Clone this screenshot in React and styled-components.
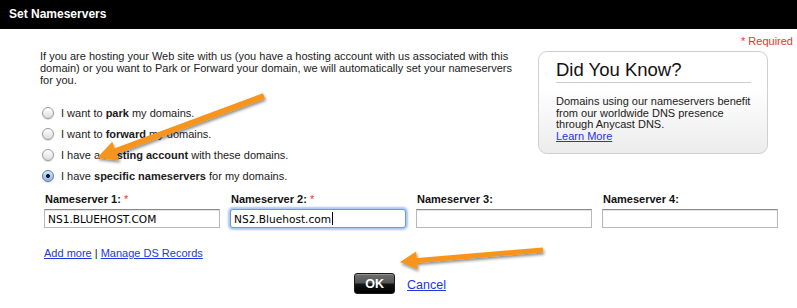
import styled, { createGlobalStyle } from "styled-components";

const GlobalStyle = createGlobalStyle`
  body {
    margin: 0;
    background: #fff;
    font-family: "Liberation Sans", Arial, sans-serif;
    color: #1a1a1a;
  }
`;

const options = [
  { before: "I want to ", bold: "park", after: " my domains." },
  { before: "I want to ", bold: "forward", after: " my domains." },
  { before: "I have a ", bold: "hosting account", after: " with these domains." },
  { before: "I have ", bold: "specific nameservers", after: " for my domains.", checked: true },
];

const servers = [
  { label: "Nameserver 1:", required: true, value: "NS1.BLUEHOST.COM" },
  { label: "Nameserver 2:", required: true, value: "NS2.Bluehost.com", focused: true },
  { label: "Nameserver 3:", value: "" },
  { label: "Nameserver 4:", value: "" },
];

const Arrow = ({ x1, y1, tipX, tipY, len, half, width }) => {
  const dx = tipX - x1;
  const dy = tipY - y1;
  const d = Math.hypot(dx, dy);
  const ux = dx / d;
  const uy = dy / d;
  const bx = tipX - ux * len;
  const by = tipY - uy * len;
  const nx = -uy;
  const ny = ux;
  const head = `${tipX},${tipY} ${bx + nx * half},${by + ny * half} ${bx - nx * half},${by - ny * half}`;
  return (
    <g filter="url(#arrowShadow)">
      <line x1={x1} y1={y1} x2={bx + ux * 2} y2={by + uy * 2} stroke="#f7941d" strokeWidth={width} />
      <polygon points={head} fill="#f7941d" />
    </g>
  );
};

export default function App() {
  return (
    <>
      <GlobalStyle />
      <Page>
        <Header>Set Nameservers</Header>
        <TopRow>
          <Main>
            <Intro>
              If you are hosting your Web site with us (you have a hosting account with us associated with this
              <br />
              domain) or you want to Park or Forward your domain, we will automatically set your nameservers
              <br />
              for you.
            </Intro>
            <Options>
              {options.map((o) => (
                <Option key={o.bold}>
                  <Radio $checked={o.checked} />
                  <span>
                    {o.before}
                    <b>{o.bold}</b>
                    {o.after}
                  </span>
                </Option>
              ))}
            </Options>
          </Main>
          <Side>
            <Required>* Required</Required>
            <InfoBox>
              <InfoTitle>Did You Know?</InfoTitle>
              <InfoText>
                Domains using our nameservers benefit
                <br />
                from our worldwide DNS presence
                <br />
                through Anycast DNS.
                <BlockLink href="#">Learn More</BlockLink>
              </InfoText>
            </InfoBox>
          </Side>
        </TopRow>

        <ServerGrid>
          {servers.map((s) => (
            <Field key={s.label}>
              <FieldLabel>
                {s.label}
                {s.required && <Star> *</Star>}
              </FieldLabel>
              <Input $focused={s.focused}>
                {s.value}
                {s.focused && <Caret />}
              </Input>
            </Field>
          ))}
        </ServerGrid>

        <Links>
          <Link href="#">Add more</Link> | <Link href="#">Manage DS Records</Link>
        </Links>

        <Actions>
          <OkButton>OK</OkButton>
          <CancelLink href="#">Cancel</CancelLink>
        </Actions>

        <Overlay viewBox="0 0 797 308">
          <defs>
            <filter id="arrowShadow" x="-20%" y="-50%" width="140%" height="200%">
              <feDropShadow dx="1" dy="2" stdDeviation="1.6" floodColor="#000" floodOpacity="0.45" />
            </filter>
          </defs>
          <Arrow x1={264} y1={96} tipX={97} tipY={158} len={20} half={10} width={6} />
          <Arrow x1={543} y1={250} tipX={400} tipY={262} len={17} half={9} width={5} />
        </Overlay>
      </Page>
    </>
  );
}

const Page = styled.div`
  position: relative;
  width: 797px;
  height: 308px;
  overflow: hidden;
  font-size: 11px;
`;

const Header = styled.div`
  height: 29px;
  line-height: 29px;
  background: #000;
  color: #fff;
  font-weight: bold;
  font-size: 12px;
  padding-left: 9px;
`;

const TopRow = styled.div`
  display: flex;
  align-items: flex-start;
`;

const Main = styled.div`
  width: 498px;
  padding: 21px 0 0 40px;
`;

const Intro = styled.p`
  margin: 0;
  line-height: 12px;
  white-space: nowrap;
`;

const Side = styled.div`
  display: flex;
  flex-direction: column;
  width: 259px;
`;

const Required = styled.div`
  margin-top: 6px;
  line-height: 12px;
  text-align: right;
  padding-right: 4px;
  color: #e2372a;
`;

const InfoBox = styled.div`
  margin-top: 4px;
  width: 230px;
  height: 103px;
  box-sizing: border-box;
  border: 1px solid #cfcfcf;
  border-radius: 9px;
  background: linear-gradient(#ffffff 35%, #ececec 100%);
  padding: 7px 16px 0 17px;
`;

const InfoTitle = styled.div`
  font-size: 18.5px;
  line-height: 22px;
  color: #111;
  padding-bottom: 1px;
  border-bottom: 1px solid #cccccc;
`;

const InfoText = styled.div`
  margin-top: 13px;
  line-height: 11.7px;
  white-space: nowrap;
`;

const Link = styled.a`
  color: #1f35dd;
  text-decoration: underline;
`;

const BlockLink = styled(Link)`
  display: block;
`;

const Options = styled.div`
  margin-top: 16px;
  padding-left: 2px;
`;

const Option = styled.div`
  display: flex;
  align-items: center;
  gap: 7px;
  height: 21px;
  white-space: nowrap;
  b {
    font-weight: bold;
  }
`;

const Radio = styled.span`
  width: 12px;
  height: 12px;
  box-sizing: border-box;
  border-radius: 50%;
  border: 1px solid ${(p) => (p.$checked ? "#5a7fb6" : "#9a9a9a")};
  background: ${(p) =>
    p.$checked
      ? "radial-gradient(circle, #1a1a1a 0 1.8px, transparent 2.2px), linear-gradient(#d8e6f7, #8fb5e4)"
      : "linear-gradient(#ffffff, #dcdcdc)"};
  box-shadow: 0 1px 1px rgba(0, 0, 0, 0.15);
  flex-shrink: 0;
`;

const ServerGrid = styled.div`
  display: grid;
  grid-template-columns: repeat(4, 176px);
  column-gap: 10px;
  padding-left: 44px;
  margin-top: 7px;
`;

const Field = styled.div`
  display: flex;
  flex-direction: column;
  gap: 4px;
`;

const FieldLabel = styled.div`
  font-weight: bold;
  line-height: 12px;
  padding-left: 1px;
  color: #111;
`;

const Star = styled.span`
  color: #e2372a;
  font-weight: normal;
`;

const Input = styled.div`
  height: 19px;
  box-sizing: border-box;
  display: flex;
  align-items: center;
  padding-left: 3px;
  font-family: "DejaVu Sans", sans-serif;
  font-size: 10.6px;
  color: #000;
  background: #fff;
  border: 1px solid #b9b9b9;
  border-top-color: #8a8a8a;
  box-shadow: inset 0 1px 1px rgba(0, 0, 0, 0.12);
  ${(p) =>
    p.$focused &&
    `
    border-color: #6f9ad6;
    border-radius: 3px;
    box-shadow: 0 0 2px 2px #a9c8ef;
  `}
`;

const Caret = styled.span`
  width: 1px;
  height: 13px;
  background: #000;
  margin-left: 1px;
`;

const Links = styled.div`
  margin-top: 19px;
  padding-left: 44px;
  line-height: 12px;
`;

const Actions = styled.div`
  display: flex;
  align-items: center;
  justify-content: center;
  gap: 12px;
  margin-top: 14px;
  padding-left: 3px;
`;

const OkButton = styled.button`
  width: 41px;
  height: 21px;
  padding: 0;
  border: 1px solid #1a1a1a;
  border-radius: 3px;
  background: linear-gradient(#6e6e6e 0%, #555 48%, #161616 52%, #000 100%);
  color: #fff;
  font-family: "Liberation Sans", Arial, sans-serif;
  font-weight: bold;
  font-size: 12.5px;
  box-shadow: inset 0 1px 0 rgba(255, 255, 255, 0.25);
`;

const CancelLink = styled(Link)`
  font-size: 12.5px;
  margin-top: 2px;
`;

const Overlay = styled.svg`
  position: absolute;
  left: 0;
  top: 0;
  width: 797px;
  height: 308px;
  pointer-events: none;
`;
